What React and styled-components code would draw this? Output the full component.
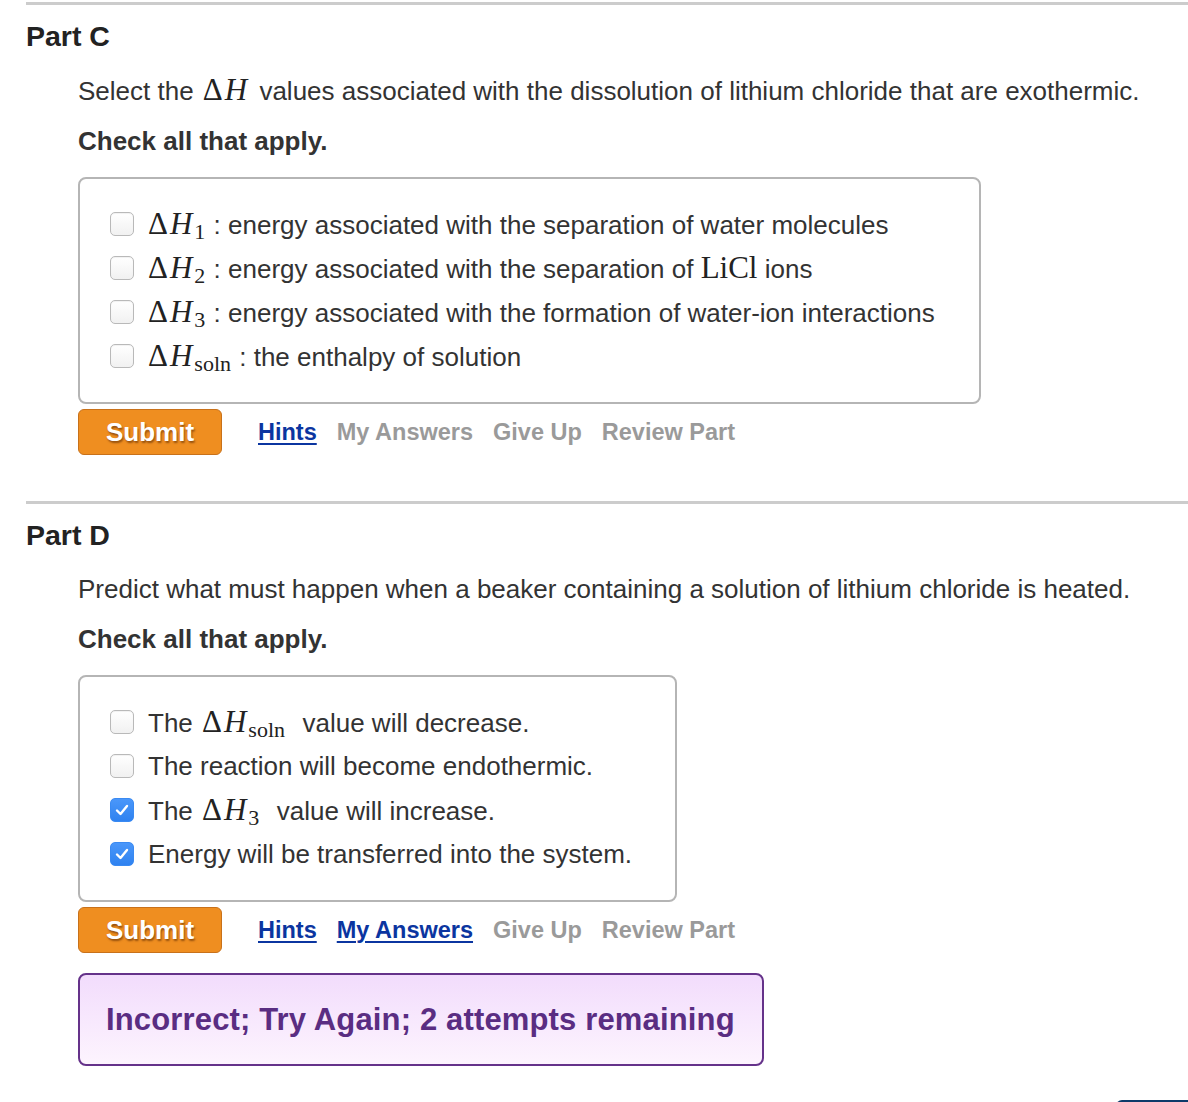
import React from 'react';
import styled, { createGlobalStyle } from 'styled-components';

const GlobalStyle = createGlobalStyle`
  body {
    margin: 0;
    background: #fff;
    font-family: "Liberation Sans", Arial, Helvetica, sans-serif;
    color: #333;
  }
`;

const Page = styled.div`
  padding-top: 2px;
  padding-left: 26px;
`;

const Section = styled.section`
  border-top: 3px solid #cccccc;
  padding-top: 16px;
  margin-top: ${(p) => (p.first ? '0' : '46px')};
`;

const PartTitle = styled.h2`
  margin: 0;
  font-size: 28.5px;
  line-height: 30px;
  font-weight: bold;
  color: #222;
`;

const Body = styled.div`
  padding-left: 52px;
`;

const Prompt = styled.p`
  margin: 23px 0 0;
  font-size: 26px;
  line-height: 32px;
  color: #333;
`;

const Instruction = styled.p`
  margin: 18px 0 0;
  font-size: 26px;
  line-height: 32px;
  font-weight: bold;
  color: #333;
`;

const OptionsBox = styled.div`
  box-sizing: border-box;
  width: ${(p) => p.width}px;
  margin-top: 20px;
  padding: 23px 40px 24px 30px;
  border: 2px solid #b5b5b5;
  border-radius: 8px;
`;

const Row = styled.label`
  display: flex;
  align-items: center;
  height: 44px;
  gap: 14px;
  font-size: 26px;
  line-height: 32px;
  color: #333;
  white-space: nowrap;
`;

const Box = styled.span`
  box-sizing: border-box;
  flex: none;
  width: 24px;
  height: 24px;
  border-radius: 5px;
  display: flex;
  align-items: center;
  justify-content: center;
  border: 1px solid ${(p) => (p.checked ? '#3a8af2' : '#b9b9b9')};
  background: ${(p) =>
    p.checked
      ? 'linear-gradient(#4a97fa, #2f82f0)'
      : 'linear-gradient(#ffffff, #f1f1f1)'};
  box-shadow: ${(p) => (p.checked ? 'none' : 'inset 0 1px 1px rgba(0,0,0,0.06)')};
`;

const Math = styled.span`
  font-family: "Liberation Serif", "DejaVu Serif", serif;
  font-size: 31px;
  line-height: 1;
  color: #222;
  white-space: nowrap;
  margin: 0 ${(p) => (p.tight ? '0' : '2px')};
`;

const Var = styled.i`
  font-style: italic;
  margin-left: 2px;
  margin-right: 3px;
`;

const Sub = styled.sub`
  font-size: 22px;
  vertical-align: -5px;
  line-height: 0;
  margin-left: -1px;
  margin-right: 1px;
`;

const Actions = styled.div`
  display: flex;
  align-items: center;
  margin-top: 5px;
  gap: 20px;
`;

const SubmitButton = styled.button`
  box-sizing: border-box;
  width: 144px;
  height: 46px;
  margin-right: 16px;
  border: 1px solid #c8711a;
  border-radius: 6px;
  background: #ef8e20;
  color: #fff;
  font-family: "Liberation Sans", Arial, sans-serif;
  font-weight: bold;
  font-size: 26px;
  text-shadow: 1px 2px 2px rgba(90, 40, 0, 0.6);
  padding: 0;
`;

const ActionLink = styled.a`
  font-size: 23.5px;
  font-weight: bold;
  color: ${(p) => (p.active ? '#0b35a0' : '#9a9a9a')};
  text-decoration: ${(p) => (p.active ? 'underline' : 'none')};
  text-underline-offset: 3px;
  text-decoration-thickness: 2px;
`;

const Feedback = styled.div`
  box-sizing: border-box;
  width: 686px;
  height: 93px;
  margin-top: 20px;
  border: 2px solid #65328a;
  border-radius: 8px;
  background: linear-gradient(#f2dcfc, #fdf4fe);
  display: flex;
  align-items: center;
  padding-left: 26px;
  font-size: 31px;
  letter-spacing: 0.15px;
  font-weight: bold;
  color: #5a2d82;
`;

const Footer = styled.div`
  display: flex;
  justify-content: flex-end;
  margin-top: 34px;
`;

const ContinueButton = styled.div`
  width: 72px;
  height: 30px;
  background: #0d3a6a;
  border-radius: 6px 0 0 0;
`;

const Check = () => (
  <svg width="16" height="16" viewBox="0 0 16 16">
    <path d="M3 8.5 L6.5 12 L13 4" fill="none" stroke="#fff" strokeWidth="2.4" strokeLinecap="round" strokeLinejoin="round" />
  </svg>
);

const DeltaH = ({ sub, tight }) => (
  <Math tight={tight}>
    Δ<Var>H</Var>
    {sub && <Sub>{sub}</Sub>}
  </Math>
);

const Option = ({ checked, children }) => (
  <Row>
    <Box checked={checked}>{checked && <Check />}</Box>
    <span>{children}</span>
  </Row>
);

const ActionBar = ({ answersActive }) => (
  <Actions>
    <SubmitButton>Submit</SubmitButton>
    <ActionLink active href="#">Hints</ActionLink>
    <ActionLink active={answersActive} href="#">My Answers</ActionLink>
    <ActionLink>Give Up</ActionLink>
    <ActionLink>Review Part</ActionLink>
  </Actions>
);

const App = () => (
  <>
    <GlobalStyle />
    <Page>
      <Section first>
        <PartTitle>Part C</PartTitle>
        <Body>
          <Prompt>
            Select the <DeltaH /> values associated with the dissolution of lithium chloride that are exothermic.
          </Prompt>
          <Instruction>Check all that apply.</Instruction>
          <OptionsBox width={903}>
            <Option>
              <DeltaH sub="1" tight /> : energy associated with the separation of water molecules
            </Option>
            <Option>
              <DeltaH sub="2" tight /> : energy associated with the separation of <Math tight>LiCl</Math> ions
            </Option>
            <Option>
              <DeltaH sub="3" tight /> : energy associated with the formation of water-ion interactions
            </Option>
            <Option>
              <DeltaH sub="soln" tight /> : the enthalpy of solution
            </Option>
          </OptionsBox>
          <ActionBar />
        </Body>
      </Section>

      <Section>
        <PartTitle>Part D</PartTitle>
        <Body>
          <Prompt>
            Predict what must happen when a beaker containing a solution of lithium chloride is heated.
          </Prompt>
          <Instruction>Check all that apply.</Instruction>
          <OptionsBox width={599}>
            <Option>
              The <DeltaH sub="soln" />&nbsp; value will decrease.
            </Option>
            <Option>The reaction will become endothermic.</Option>
            <Option checked>
              The <DeltaH sub="3" />&nbsp; value will increase.
            </Option>
            <Option checked>Energy will be transferred into the system.</Option>
          </OptionsBox>
          <ActionBar answersActive />
          <Feedback>Incorrect; Try Again; 2 attempts remaining</Feedback>
        </Body>
        <Footer>
          <ContinueButton />
        </Footer>
      </Section>
    </Page>
  </>
);

export default App;
